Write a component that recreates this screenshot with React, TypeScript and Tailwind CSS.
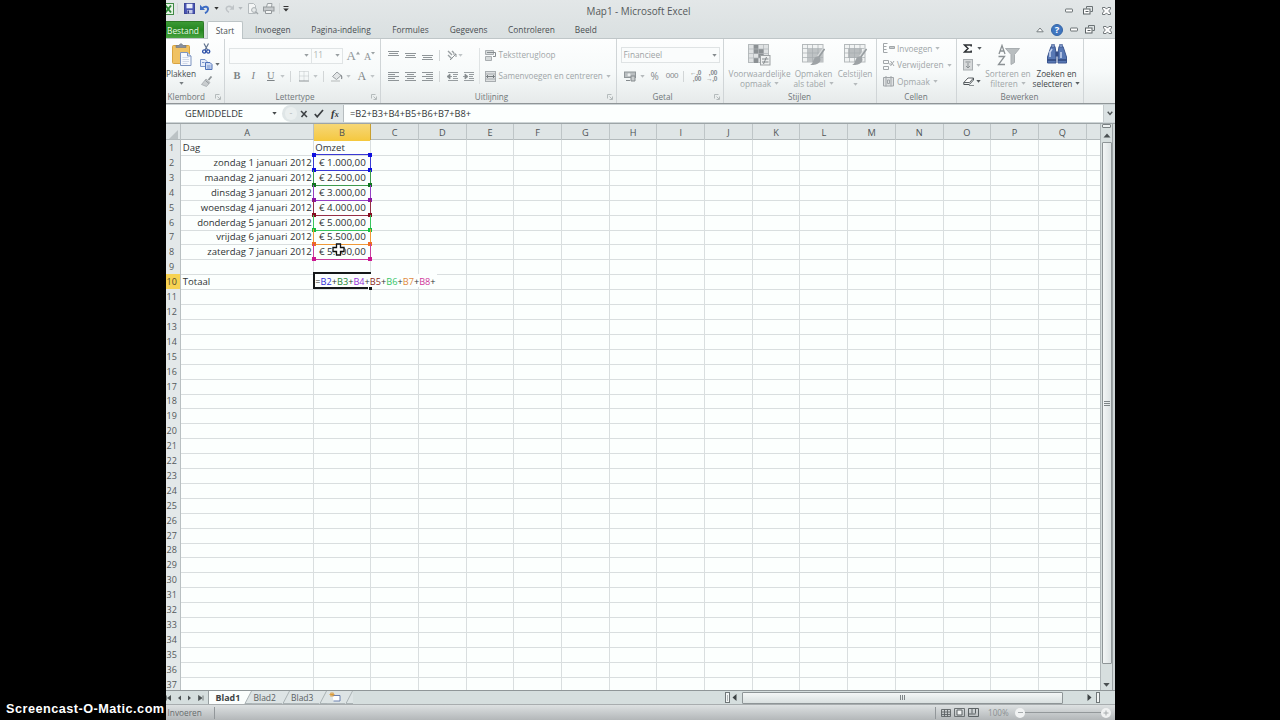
import React from 'react';

const CELL_COLUMNS = ['C', 'D', 'E', 'F', 'G', 'H', 'I', 'J', 'K', 'L', 'M', 'N', 'O', 'P', 'Q'];
const GRID = 'grid grid-cols-[15.300px_132.500px_57.500px_repeat(15,47.690px)_minmax(0,1fr)]';

const DAYS = [
  { label: 'zondag 1 januari 2012', amount: '€ 1.000,00', border: 'border-[#3a3ad4]', handle: 'bg-[#1010e0]', text: 'text-[#3030d8]' },
  { label: 'maandag 2 januari 2012', amount: '€ 2.500,00', border: 'border-[#3f9a50]', handle: 'bg-[#107520]', text: 'text-[#258535]' },
  { label: 'dinsdag 3 januari 2012', amount: '€ 3.000,00', border: 'border-[#9440c4]', handle: 'bg-[#8a18a8]', text: 'text-[#9434d8]' },
  { label: 'woensdag 4 januari 2012', amount: '€ 4.000,00', border: 'border-[#963048]', handle: 'bg-[#850d20]', text: 'text-[#8c2a20]' },
  { label: 'donderdag 5 januari 2012', amount: '€ 5.000,00', border: 'border-[#38c45e]', handle: 'bg-[#12c040]', text: 'text-[#35c465]' },
  { label: 'vrijdag 6 januari 2012', amount: '€ 5.500,00', border: 'border-[#ee9a3a]', handle: 'bg-[#ee6a25]', text: 'text-[#e08a40]' },
  { label: 'zaterdag 7 januari 2012', amount: '€ 5.000,00', border: 'border-[#c83e9e]', handle: 'bg-[#cc1590]', text: 'text-[#d03a9c]' },
];

type IconProps = { className?: string };

function Svg({ w, h, className = '', children }: { w: number; h: number; className?: string; children: React.ReactNode }) {
  return (
    <svg width={w} height={h} viewBox={`0 0 ${w} ${h}`} className={`shrink-0 ${className}`} fill="none">
      {children}
    </svg>
  );
}

function Caret({ className = 'text-[#a5abad]' }: IconProps) {
  return (
    <Svg w={5} h={3} className={className}>
      <path d="M0.3 0h4.4L2.5 2.8z" fill="currentColor" />
    </Svg>
  );
}

function Divider({ className = '' }: IconProps) {
  return <div className={`h-[11px] w-px shrink-0 bg-[#d2d6d7] ${className}`} />;
}

/* ---------- vensterknoppen ---------- */

function WindowButtons({ tight = false }: { tight?: boolean }) {
  return (
    <>
      <Svg w={8} h={5}>
        <rect x="0.5" y="1" width="7" height="3" rx="0.5" fill="#fff" stroke="#6b7275" />
      </Svg>
      <Svg w={10} h={9} className={tight ? 'ml-[7px]' : 'ml-[10px]'}>
        <path d="M3.500 2.500v-2h6v5h-2" stroke="#6b7275" />
        <rect x="0.500" y="3" width="6.500" height="5" stroke="#5b6265" fill="#fff" />
        <path d="M2.500 5.500h3" stroke="#5b6265" />
      </Svg>
      <Svg w={9} h={8} className={tight ? 'ml-[8px]' : 'ml-[9px]'}>
        <path d="M0.500 0.500h2.600l1.400 1.600L5.900.500h2.600v1.400L6.700 4l1.800 2.100v1.400H5.900L4.500 5.900 3.100 7.500H.5V6.100L2.300 4 .5 1.900z" fill="#fff" stroke="#62696c" strokeWidth="0.900" />
      </Svg>
    </>
  );
}

function TitleBar() {
  return (
    <div className="relative flex h-[21px] items-center overflow-hidden">
      <Svg w={8} h={12} className="-mt-[4px]">
        <rect x="-2" y="0.500" width="9.500" height="11" fill="#e8f4e6" stroke="#3f8a45" />
        <path d="M-.5 2.500l5.500 7M5 2.500l-5.500 7" stroke="#2f8a3a" strokeWidth="2" />
      </Svg>
      <Divider className="ml-[3px] -mt-[4px]" />
      <Svg w={11} h={11} className="ml-[6px] -mt-[4px]">
        <rect x="0.500" y="0.500" width="10" height="10" fill="#4a56b4" stroke="#3d4798" />
        <rect x="2.500" y="0.800" width="6" height="4.500" fill="#e9edfb" />
        <rect x="3" y="7" width="5.500" height="3.500" fill="#c7cdea" />
        <rect x="3.500" y="7.500" width="1.500" height="3" fill="#323b82" />
      </Svg>
      <Svg w={10} h={10} className="ml-[5px] -mt-[4px]">
        <path d="M2 4.200C5 1.600 8.500 2.500 8 5.500 7.800 7.200 6.500 8.500 5 9.200" stroke="#3d6cc4" strokeWidth="2" />
        <path d="M0 0.800v5.200h5z" fill="#3d6cc4" />
      </Svg>
      <Caret className="ml-[4px] -mt-[5px] text-[#333]" />
      <Svg w={9} h={9} className="ml-[6px] -mt-[4px]">
        <path d="M7 3.500C4.500 1.500 1 2.200 1.300 5 1.500 6.500 2.500 7.700 4 8.200" stroke="#bfc4c7" strokeWidth="1.600" />
        <path d="M9 0.800v5H4.500z" fill="#bfc4c7" />
      </Svg>
      <Caret className="ml-[4px] -mt-[5px] text-[#b5babd]" />
      <Svg w={12} h={12} className="ml-[4px] -mt-[4px]">
        <path d="M1.500 0.500h5l2 2v8h-7z" fill="#f3f5f5" stroke="#b4babd" />
        <circle cx="7" cy="7" r="2.400" fill="#e6eaea" stroke="#a8aeb1" />
        <path d="M8.700 8.700l2.300 2.300" stroke="#a0a6a9" strokeWidth="1.400" />
      </Svg>
      <Svg w={12} h={11} className="ml-[4px] -mt-[4px]">
        <path d="M3.500 4L4.500.5h4.500L8.500 4" fill="#f2f4f4" stroke="#9ba1a4" />
        <rect x="0.500" y="4" width="10.500" height="4" fill="#c6cacc" stroke="#94999c" />
        <path d="M2.500 7.500h6v3h-6z" fill="#f2f4f4" stroke="#94999c" />
      </Svg>
      <Divider className="ml-[4px] -mt-[4px]" />
      <Svg w={6} h={6} className="ml-[3px] -mt-[3px]">
        <path d="M0.500 0.500h5" stroke="#333" />
        <path d="M0.200 2.500h5.600L3 5.600z" fill="#333" />
      </Svg>
      <div className="absolute top-[4px] left-[420.500px] text-[9.900px] leading-[14px] whitespace-nowrap text-[#55595b]">
        Map1 - Microsoft Excel
      </div>
      <div className="mr-[4px] ml-auto flex items-center">
        <WindowButtons />
      </div>
    </div>
  );
}

function TabBar() {
  return (
    <div className="flex h-[17px] items-stretch text-[8.350px] leading-[18px] text-[#4a4f52]">
      <div className="w-[38px] rounded-tr-[2px] border-t border-r border-[#2c7a25] bg-linear-to-b from-[#3b9a35] via-[#23861f] to-[#48a540] pr-[3px] text-center leading-[17px] text-[#eafbe6]">Bestand</div>
      <div className="z-10 ml-[3px] h-[18px] w-[36px] rounded-t-[2px] border border-b-0 border-[#bcc4c6] bg-[#fdfefe] text-center leading-[17px]">Start</div>
      <div className="ml-[12px]">Invoegen</div>
      <div className="ml-[20.500px]">Pagina-indeling</div>
      <div className="ml-[21.500px]">Formules</div>
      <div className="ml-[21px]">Gegevens</div>
      <div className="ml-[20.500px]">Controleren</div>
      <div className="ml-[20px]">Beeld</div>
      <div className="mr-[3px] ml-auto flex items-center">
        <Svg w={8} h={6}>
          <path d="M0.800 4.800L4 1l3.200 3.800z" fill="#fff" stroke="#777e81" />
        </Svg>
        <Svg w={12} h={12} className="ml-[7px]">
          <circle cx="6" cy="6" r="5.500" fill="#3f76bf" stroke="#3565a6" />
          <text x="6" y="9.300" textAnchor="middle" fontSize="9.500" fontWeight="700" fill="#fff">?</text>
        </Svg>
        <div className="ml-[7px] flex items-center">
          <WindowButtons tight />
        </div>
      </div>
    </div>
  );
}

/* ---------- lint ---------- */

function Group({ title, width, launcher = true, labelClass = '', children }: { title: string; width: string; launcher?: boolean; labelClass?: string; children: React.ReactNode }) {
  return (
    <div className={`flex h-full shrink-0 flex-col border-r border-[#d0d5d7] ${width}`}>
      <div className="h-[51px] shrink-0">{children}</div>
      <div className="flex h-[13px] shrink-0 items-center text-[8.150px] leading-[13px] text-[#707679]">
        <span className={`flex-1 text-center ${labelClass}`}>{title}</span>
        {launcher && (
          <Svg w={6} h={6} className="mr-[3px]">
            <path d="M0.500 4.500v-4h4M2.500 2.500l2.500 2.500M5.500 2.500v3h-3" stroke="#aeb4b6" strokeWidth="0.900" />
          </Svg>
        )}
      </div>
    </div>
  );
}

function ClipboardGroup() {
  return (
    <Group title="Klembord" width="w-[58.500px]" labelClass="pr-[8px]">
      <div className="flex">
        <div className="flex w-[30px] flex-col items-center pt-[4px]">
          <Svg w={22} h={23} className="-ml-px">
            <rect x="2.500" y="2.500" width="17" height="18" rx="1" fill="#f0c263" stroke="#d9a441" />
            <path d="M6 4.500V2.500h2.500L11 .5l2.500 2H16v2z" fill="#8790a0" stroke="#6d7585" strokeWidth="0.600" />
            <path d="M10.500 9.500h7l3.500 3.500v9.500H10.500z" fill="#f7f9fd" stroke="#7d94c0" />
            <path d="M17.500 9.500v3.500H21" stroke="#7d94c0" fill="#d5deef" />
            <path d="M12.500 14.500h6M12.500 16.500h6.500M12.500 18.500h6.500M12.500 20.500h5" stroke="#c0cbe0" strokeWidth="0.700" />
          </Svg>
          <span className="mt-[2px] text-[8.300px] leading-[12px] text-[#4a4f52]">Plakken</span>
          <Caret className="mt-[2px] text-[#777d80]" />
        </div>
        <div className="flex flex-col pt-[4px] pl-[4px]">
          <Svg w={9} h={11} className="ml-[2px]">
            <path d="M2 .5L5.500 7M6.500.5L3 7" stroke="#62748f" strokeWidth="1.200" />
            <circle cx="2.200" cy="8.500" r="1.600" stroke="#2c50a8" strokeWidth="1.300" />
            <circle cx="6.200" cy="8.500" r="1.600" stroke="#2c50a8" strokeWidth="1.300" />
          </Svg>
          <div className="mt-[5px] flex items-center">
            <Svg w={13} h={11}>
              <path d="M0.500 0.500h4.500l2 2v5H.5z" fill="#e6ecf8" stroke="#7a95c8" />
              <path d="M5.500 3.500h4.500l2 2v5H5.500z" fill="#cddaf2" stroke="#4c70b8" />
              <path d="M2 3.500h2.500M7 7h3.500M7 9h3.500" stroke="#5e7fc0" strokeWidth="0.800" />
            </Svg>
            <Caret className="ml-[2px] text-[#666c6f]" />
          </div>
          <Svg w={12} h={11} className="mt-[6px] ml-px">
            <path d="M10.500.5L7.500 4" stroke="#8d9396" strokeWidth="1.800" />
            <path d="M5 3l4 3.500-3.500 4L.5 8.500z" fill="#c9cdcf" stroke="#a5aaad" strokeWidth="0.800" />
            <path d="M4.500 4.500l3.500 3" stroke="#8d9396" />
          </Svg>
        </div>
      </div>
    </Group>
  );
}

function FontGroup() {
  return (
    <Group title="Lettertype" width="w-[156px]" labelClass="pr-[5px]">
      <div className="flex h-[32px] items-center pl-[4px] pt-px">
        <div className="flex h-[16px] w-[83px] items-center justify-end border border-[#e0e4e5] bg-[#fafcfc] pr-[2px]">
          <Caret className="text-[#999fa2]" />
        </div>
        <div className="flex h-[16px] w-[31px] items-center border border-l-0 border-[#e0e4e5] bg-[#fafcfc] pl-[2px] text-[8.300px] text-[#acb1b3]">
          11
          <Caret className="mr-[2px] ml-auto text-[#999fa2]" />
        </div>
        <span className="ml-[4px] font-['Liberation_Serif'] text-[13px] leading-[14px] text-[#8f9598]">A</span>
        <Svg w={4} h={10}><path d="M0 3.500L2 .5l2 3z" fill="#9ba1a3" /></Svg>
        <span className="ml-[4px] pt-[2px] font-['Liberation_Serif'] text-[10px] leading-[12px] text-[#8f9598]">A</span>
        <Svg w={4} h={10}><path d="M0 1l2 2.500L4 1z" fill="#9ba1a3" /></Svg>
      </div>
      <div className="-mt-[4px] flex h-[18px] items-center pl-[9px] font-['Liberation_Serif'] text-[10.500px] leading-[18px] text-[#7e8487]">
        <span className="font-bold">B</span>
        <span className="ml-[11px] italic">I</span>
        <span className="ml-[12px] underline">U</span>
        <Caret className="ml-[5px] text-[#c0c5c7]" />
        <Divider className="ml-[5px]" />
        <Svg w={11} h={11} className="ml-[8px]">
          <path d="M.5.5h9v9M.5.5v9M5 .5v9M.5 5h9" stroke="#bfc4c6" strokeDasharray="1 1" />
          <path d="M0 10h10" stroke="#8f9598" />
        </Svg>
        <Caret className="ml-[3px] text-[#c0c5c7]" />
        <Divider className="ml-[5px]" />
        <Svg w={12} h={11} className="ml-[7px]">
          <path d="M1.500 5.500L6 1l4 3.500-4.500 4z" fill="#e3e6e7" stroke="#9aa0a3" />
          <path d="M9.500 4c1.500.5 1.500 2 1 4" stroke="#858b8e" strokeWidth="1.200" />
          <path d="M0 10h9" stroke="#c8cccd" strokeWidth="1.500" />
        </Svg>
        <Caret className="ml-[3px] text-[#c0c5c7]" />
        <span className="ml-[7px] text-[12px]">A</span>
        <Caret className="ml-[4px] text-[#c0c5c7]" />
      </div>
    </Group>
  );
}

// Zes varianten van uitlijning, elk in een vak van 11x11
function Lines({ kind, className = '' }: { kind: 'top' | 'middle' | 'bottom' | 'left' | 'center' | 'right'; className?: string }) {
  const paths = {
    top: 'M0 1.500h11M1 3.500h9M0 5.500h11',
    middle: 'M0 3.500h11M1 5.500h9M0 7.500h11',
    bottom: 'M0 5.500h11M1 7.500h9M0 9.500h11',
    left: 'M0 1.500h11M0 3.500h7M0 5.500h11M0 7.500h7M0 9.500h11',
    center: 'M0 1.500h11M2 3.500h7M0 5.500h11M2 7.500h7M0 9.500h11',
    right: 'M0 1.500h11M4 3.500h7M0 5.500h11M4 7.500h7M0 9.500h11',
  };
  return (
    <Svg w={11} h={11} className={className}>
      <path d={paths[kind]} stroke="#8f9598" />
    </Svg>
  );
}

function Indent({ flip = false, className = '' }: { flip?: boolean; className?: string }) {
  return (
    <Svg w={11} h={11} className={className}>
      <path d="M1 1.500h10M6 3.500h5M6 5.500h4M6 7.500h5M1 9.500h10" stroke="#989ea1" />
      <path d={flip ? 'M0 5.500h3M2 3l3 2.500-3 2.500z' : 'M2 5.500h3M3 3L0 5.500 3 8z'} stroke="#858b8e" fill="#858b8e" strokeWidth="0.800" />
    </Svg>
  );
}

function AlignGroup() {
  return (
    <Group title="Uitlijning" width="w-[236px]" labelClass="pr-[4px]">
      <div className="flex text-[8.150px] text-[#a0a6a8]">
        <div className="flex w-[98px] flex-col">
          <div className="flex h-[32px] items-center pl-[7px]">
            <Lines kind="top" />
            <Lines kind="middle" className="ml-[6px]" />
            <Lines kind="bottom" className="ml-[6px]" />
            <Divider className="ml-[6px]" />
            <Svg w={12} h={11} className="ml-[7px]">
              <path d="M1 1l4 4M1 5l4 4M5 1l2 2" stroke="#9aa0a3" strokeWidth="1.400" />
              <path d="M3 10l6-6M9 4v3M9 4H6" stroke="#8f9598" />
            </Svg>
            <Caret className="-ml-px text-[#c0c5c7]" />
          </div>
          <div className="-mt-[4px] flex h-[18px] items-center pl-[7px]">
            <Lines kind="left" />
            <Lines kind="center" className="ml-[6px]" />
            <Lines kind="right" className="ml-[6px]" />
            <Divider className="ml-[6px]" />
            <Indent className="ml-[7px]" />
            <Indent flip className="ml-[5px]" />
          </div>
        </div>
        <div className="mt-[9px] h-[36px] w-px bg-[#dfe3e4]" />
        <div className="flex flex-col pl-[5px]">
          <div className="flex h-[32px] items-center whitespace-nowrap">
            <Svg w={11} h={11}>
              <path d="M.5.5h8v4h-8zM.5 6.500h6v4h-6z" fill="#d6dadb" stroke="#a8adb0" />
              <path d="M2 2.500h8.500v4H8" stroke="#858b8e" />
            </Svg>
            <span className="ml-[3px]">Tekstterugloop</span>
          </div>
          <div className="-mt-[4px] flex h-[18px] items-center whitespace-nowrap">
            <Svg w={11} h={11}>
              <rect x="0.500" y="0.500" width="10" height="10" fill="#dde0e1" stroke="#a8adb0" />
              <path d="M.5 3h10M.5 8h10" stroke="#a8adb0" />
              <path d="M1.500 5.500h8M3 4L1.500 5.500 3 7M8 4l1.500 1.500L8 7" stroke="#777d80" />
            </Svg>
            <span className="ml-[3px]">Samenvoegen en centreren</span>
            <Caret className="ml-[3px] text-[#b5babc]" />
          </div>
        </div>
      </div>
    </Group>
  );
}

function NumberGroup() {
  return (
    <Group title="Getal" width="w-[107px]" labelClass="pr-[5px]">
      <div className="flex h-[32px] items-center pl-[4px] text-[8.300px] text-[#9da3a5]">
        <div className="flex h-[16px] w-[99px] items-center border border-[#dfe3e4] bg-[#fafcfc] pl-[2px]">
          Financieel
          <Caret className="mr-[2px] ml-auto text-[#858b8e]" />
        </div>
      </div>
      <div className="-mt-[4px] flex h-[18px] items-center pl-[7px] text-[8.500px] text-[#858b8e]">
        <Svg w={12} h={11}>
          <rect x="0.500" y="1" width="11" height="5.500" fill="#b9bec0" stroke="#8f9598" />
          <circle cx="5" cy="3.700" r="1.500" fill="#ecefef" />
          <path d="M7 5h4v5H7zM2 9.500h4" stroke="#858b8e" fill="#c9cdce" />
        </Svg>
        <Caret className="ml-[4px] text-[#b5babc]" />
        <span className="ml-[6px] text-[10px]">%</span>
        <span className="ml-[7px] font-['Liberation_Sans'] text-[8px] tracking-[-0.300px]">000</span>
        <Divider className="ml-[5px]" />
        <div className="ml-[5px] w-[12px] text-right font-['Liberation_Sans'] text-[6.500px] leading-[6px] font-bold tracking-[-0.200px]">
          ←,0
          <br />
          ,00
        </div>
        <div className="ml-[4px] w-[12px] text-right font-['Liberation_Sans'] text-[6.500px] leading-[6px] font-bold tracking-[-0.200px]">
          ,00
          <br />
          →,0
        </div>
      </div>
    </Group>
  );
}

function BigButton({ width, lines, caret, enabled = false, children }: { width: string; lines: string[]; caret: 'inline' | 'below'; enabled?: boolean; children: React.ReactNode }) {
  return (
    <div className={`flex flex-col items-center pt-[5px] text-[8.250px] leading-[9.500px] whitespace-nowrap ${width} ${enabled ? 'text-[#45494c]' : 'text-[#a0a6a8]'}`}>
      {children}
      <span className="mt-[3px]">{lines[0]}</span>
      {caret === 'inline' ? (
        <span className="flex items-center">
          {lines[1]}
          <Caret className={`ml-[3px] ${enabled ? 'text-[#5a6063]' : 'text-[#b5babc]'}`} />
        </span>
      ) : (
        <Caret className="mt-[4px] text-[#b5babc]" />
      )}
    </div>
  );
}

function StylesGroup() {
  return (
    <Group title="Stijlen" width="w-[153px]" launcher={false}>
      <div className="flex pl-[4px]">
        <BigButton width="w-[64px]" lines={['Voorwaardelijke', 'opmaak']} caret="inline">
          <Svg w={23} h={22}>
            <rect x="0.500" y="0.500" width="20" height="18" fill="#dfe2e3" stroke="#b5babc" />
            <path d="M6 1h4v9H6zM6 14h4v5H6zM10 5h6v9h-6z" fill="#8b9093" />
            <path d="M.5 5h20M.5 9.500h20M.5 14h20M5.500.5v18M10.500.5v18M15.500.5v18" stroke="#b0b5b7" strokeWidth="0.700" />
            <rect x="12.500" y="11.500" width="9.500" height="9.500" fill="#eef0f0" stroke="#9da2a4" />
            <path d="M14 15h6.500M14 18h6.500M18.500 13l-3 7" stroke="#858b8e" />
          </Svg>
        </BigButton>
        <BigButton width="w-[44px]" lines={['Opmaken', 'als tabel']} caret="inline">
          <TableBrush />
        </BigButton>
        <BigButton width="w-[39px]" lines={['Celstijlen']} caret="below">
          <TableBrush solid />
        </BigButton>
      </div>
    </Group>
  );
}

function TableBrush({ solid = false }: { solid?: boolean }) {
  return (
    <Svg w={23} h={22}>
      <rect x="0.500" y="0.500" width="20.500" height="17.500" fill="#f1f3f3" stroke="#b5babc" />
      {solid ? (
        <rect x="4" y="4.500" width="14" height="9.500" fill="#b9bdbf" />
      ) : (
        <path d="M6 5h15v13H6z" fill="#bfc3c5" />
      )}
      <path d="M.5 4.500h20.500M.5 9h20.500M.5 13.500h20.500M5.500.5v17.500M10.500.5v17.500M16 .5v17.500" stroke="#a8adb0" strokeWidth="0.700" />
      <path d="M22 4.500l-6.500 9" stroke="#d9dcdd" strokeWidth="2.600" />
      <path d="M22.500 5l-6 8.500" stroke="#979da0" strokeWidth="1.600" />
      <path d="M16.500 12.500c2 1 2.500 3 1.500 5s-5 4-10 3.500c3-1.500 2.500-3 4-6 1-2 3-3 4.500-2.500z" fill="#9ea3a6" />
    </Svg>
  );
}

function CellsGroup() {
  const items = ['Invoegen', 'Verwijderen', 'Opmaak'];
  return (
    <Group title="Cellen" width="w-[80px]" launcher={false}>
      <div className="flex flex-col pt-[1.500px] pl-[6px] text-[8.300px] text-[#a0a6a8]">
        {items.map((item, i) => (
          <div key={item} className="flex h-[16.500px] items-center">
            <Svg w={12} h={11}>
              {i === 0 && <path d="M.5.5h4M.5.5v9M.5 9.500h4M.5 3.500h3M.5 6.500h3M6.500 3.500h5v2h-5z" stroke="#a1a6a9" fill="#c8ccce" />}
              {i === 1 && <path d="M.5.500h5v3h-5zM.5 6.500h5v3h-5zM6 4h2M7.500 1l3.500 5M11 1L7.500 6" stroke="#a1a6a9" />}
              {i === 2 && <path d="M.5 1.500h10v8.500H.5zM3 0v10.500M8 0v10.500M4.500 4h2v3.500h-2z" stroke="#a1a6a9" fill="#dfe2e3" />}
            </Svg>
            <span className="ml-[2.500px]">{item}</span>
            <Caret className="ml-[3px] text-[#b5babc]" />
          </div>
        ))}
      </div>
    </Group>
  );
}

function EditGroup() {
  return (
    <Group title="Bewerken" width="w-[127px]" launcher={false}>
      <div className="flex">
        <div className="flex w-[27px] flex-col pt-[1.500px] pl-[6.500px]">
          <div className="flex h-[16.500px] items-center">
            <Svg w={10} h={9}>
              <path d="M8.200 2.500V1H1.500L5 4.500 1.500 8h6.700V6.500" stroke="#2c3033" strokeWidth="1.500" />
            </Svg>
            <Caret className="ml-[4px] text-[#555b5e]" />
          </div>
          <div className="flex h-[16.500px] items-center">
            <Svg w={10} h={12}>
              <rect x="0.500" y="0.500" width="9" height="10.500" fill="#d6d9da" stroke="#a8adb0" />
              <path d="M2.500 3h5M5 4v5M3 7l2 2 2-2" stroke="#8b9194" />
            </Svg>
            <Caret className="ml-[3px] text-[#b5babc]" />
          </div>
          <div className="flex h-[16.500px] items-center">
            <Svg w={12} h={9}>
              <path d="M.8 5.500L5 1h5.500L6.500 5.500z" fill="#fff" stroke="#5b6164" />
              <path d="M.8 5.500v2h5.500l4.200-4.500V1" stroke="#4e5457" />
              <path d="M6 8.500h5" stroke="#8b9194" />
            </Svg>
            <Caret className="ml-px text-[#555b5e]" />
          </div>
        </div>
        <BigButton width="w-[49px]" lines={['Sorteren en', 'filteren']} caret="inline">
          <Svg w={23} h={22}>
            <path d="M8.500 4.500h14l-5 6v8l-3.500 2v-10z" fill="#b9bec0" stroke="#a8adb0" />
            <path d="M2 10L5 1.500 8 10M3 7h4M1.500 12.500h6l-6 8h6.500" stroke="#8b9194" strokeWidth="1.300" />
          </Svg>
        </BigButton>
        <BigButton width="w-[48px]" lines={['Zoeken en', 'selecteren']} caret="inline" enabled>
          <Svg w={22} h={22}>
            <path d="M5 2.500h4l1 6.500v10H1.500V13z" fill="#5878b4" stroke="#3c5791" />
            <path d="M13 2.500h4L20.500 13v6H12V9z" fill="#5878b4" stroke="#3c5791" />
            <path d="M9.500 7.500h3v5h-3z" fill="#344d85" />
            <path d="M5.500.5h3v3h-3zM13.500.5h3v3h-3z" fill="#7b93c4" stroke="#3c5791" strokeWidth="0.600" />
            <path d="M4 13V8l2-3M15 8v6" stroke="#c3d1ee" strokeWidth="1.600" />
            <path d="M1.500 16h8.500M12 16h8.500" stroke="#2e467c" strokeWidth="1.400" />
          </Svg>
        </BigButton>
      </div>
    </Group>
  );
}

function Ribbon() {
  return (
    <div className="flex h-[66px] border-t border-b border-t-[#bfc6c8] border-b-[#8f9597] bg-linear-to-b from-[#fdfefe] via-[#f7fafa] to-[#e6eaea]">
      <ClipboardGroup />
      <FontGroup />
      <AlignGroup />
      <NumberGroup />
      <StylesGroup />
      <CellsGroup />
      <EditGroup />
    </div>
  );
}

function FormulaBar() {
  return (
    <div className="flex h-[17px] items-center bg-[#fcfffe] text-[9.250px] leading-[17px] text-[#333738]">
      <div className="flex h-full w-[114px] items-center pl-[19px]">
        GEMIDDELDE
        <Caret className="mr-[3px] ml-auto text-[#44494b]" />
      </div>
      <div className="ml-[2px] flex h-full w-[62px] items-center rounded-l-full border-r border-[#b6bdbf] bg-[#dfe6e7] pl-[3px]">
        <div className="h-[13px] w-[12px] rounded-full bg-[#eaefef] text-center text-[9px] leading-[11px] text-[#b5babc]">-</div>
        <Svg w={8} h={8} className="ml-[3px]">
          <path d="M1 1l6 6M6.500 1L1.500 7" stroke="#3b3f42" strokeWidth="1.500" />
        </Svg>
        <Svg w={10} h={9} className="ml-[6px]">
          <path d="M.8 5l2.400 2.800L9 1" stroke="#3b3f42" strokeWidth="1.700" />
        </Svg>
        <span className="ml-[7px] font-['Liberation_Serif'] text-[11px] font-bold italic">
          f<span className="text-[8px]">x</span>
        </span>
      </div>
      <div className="flex-1 pl-[6px]">=B2+B3+B4+B5+B6+B7+B8+</div>
      <div className="flex h-full w-[12px] items-center justify-center border-l border-[#c5cbcd] bg-[#dbe2e3]">
        <Svg w={6} h={5}>
          <path d="M.7.8L3 3.500 5.300.8" stroke="#4f5557" strokeWidth="1.400" />
        </Svg>
      </div>
    </div>
  );
}

/* ---------- werkblad ---------- */

function HeaderRow() {
  return (
    <div className={`${GRID} h-[16px] border-b border-[#b3babc] bg-[#dfe5e6] text-center text-[9.200px] leading-[17px] text-[#4e5355]`}>
      <div className="flex items-end justify-end border-r border-[#b9c0c2] pr-[2px] pb-[2px]">
        <Svg w={9} h={9}>
          <path d="M9 0v9H0z" fill="#bbc2c4" />
        </Svg>
      </div>
      <div className="border-r border-[#b9c0c2]">A</div>
      <div className="border-r border-[#c89f30] bg-linear-to-b from-[#f6d775] to-[#f5c83c]">B</div>
      {CELL_COLUMNS.map((c) => (
        <div key={c} className="border-r border-[#bec5c7]">{c}</div>
      ))}
      <div />
    </div>
  );
}

function Handles({ color, top = false }: { color: string; top?: boolean }) {
  return (
    <>
      <div className={`absolute -bottom-[2px] -left-[2px] h-[4px] w-[4px] ${color}`} />
      <div className={`absolute -right-[2px] -bottom-[2px] h-[4px] w-[4px] ${color}`} />
      {top && (
        <>
          <div className={`absolute -top-[2px] -left-[2px] h-[4px] w-[4px] ${color}`} />
          <div className={`absolute -top-[2px] -right-[2px] h-[4px] w-[4px] ${color}`} />
        </>
      )}
    </>
  );
}

function SheetRow({ n }: { n: number }) {
  const day = n >= 2 && n <= 8 ? DAYS[n - 2] : null;
  const cell = 'border-r border-b border-[#d9dedf]';
  return (
    <div className={`${GRID} h-[14.920px] text-[9.550px] leading-[15px] whitespace-nowrap text-[#2f3334]`}>
      <div className={`-ml-[3px] border-r border-b border-[#b9c0c2] text-center text-[9px] ${n === 10 ? 'bg-[#f7d252] text-[#4a4630]' : 'bg-[#e3e8e9] text-[#54595b]'}`}>{n}</div>
      <div className={`${cell} ${day ? 'pr-px text-right' : 'pl-[1.500px]'}`}>
        {n === 1 && 'Dag'}
        {n === 10 && 'Totaal'}
        {day && day.label}
      </div>
      <div className={`relative ${cell}`}>
        {n === 1 && <span className="pl-[1.500px]">Omzet</span>}
        {day && (
          <>
            <div className="pr-[4.500px] text-right text-[9.800px]">{day.amount}</div>
            {/* alleen de eerste rij heeft een eigen bovenrand */}
            <div className={`absolute -right-px -bottom-px -left-px z-10 border ${n === 2 ? '-top-px' : 'top-0 border-t-0'} ${day.border}`}>
              <Handles color={day.handle} top={n === 2} />
            </div>
          </>
        )}
        {n === 8 && (
          <Svg w={13} h={13} className="absolute -top-px left-[18px] z-20">
            <path d="M4.500 1h4v3.500H12v4H8.500V12h-4V8.500H1v-4h3.500z" fill="#fff" stroke="#111" strokeWidth="1.300" />
          </Svg>
        )}
        {n === 10 && (
          <div className="absolute -top-[2px] -left-px z-10 h-[17px] w-[58px] border-2 border-r-0 border-[#15181a]">
            <div className="h-[13px] w-[122px] bg-[#fcfffe] pl-[0.500px] text-[9.180px] leading-[15px]">
              =
              {DAYS.map((d, i) => (
                <React.Fragment key={d.label}>
                  <span className={d.text}>B{i + 2}</span>+
                </React.Fragment>
              ))}
            </div>
            <div className="absolute -right-px -bottom-[3px] h-[3px] w-[4px] border-l border-[#fcfffe] bg-[#15181a]" />
          </div>
        )}
      </div>
      {CELL_COLUMNS.map((c) => (
        <div key={c} className={cell} />
      ))}
      <div className="border-b border-[#d9dedf]" />
    </div>
  );
}

function VerticalScroll() {
  return (
    <div className="flex w-[12px] flex-col items-center border-l border-[#b0b7b9] bg-[#d7dfdf]">
      <div className="h-[4px] w-[9px] rounded-[1px] border border-[#7a8183] bg-[#eef2f2]" />
      <Svg w={8} h={5} className="mt-[5px]">
        <path d="M0.500 4.500L4 .5l3.500 4z" fill="#4a5052" />
      </Svg>
      <div className="mt-[4px] flex h-[522px] w-[10px] flex-col items-center justify-center gap-px rounded-[1px] border border-[#8e9597] bg-linear-to-r from-[#f3f6f6] to-[#dde3e4]">
        <div className="h-px w-[6px] bg-[#7e8587]" />
        <div className="h-px w-[6px] bg-[#7e8587]" />
        <div className="h-px w-[6px] bg-[#7e8587]" />
      </div>
      <Svg w={7} h={4} className="mt-auto mb-[3px]">
        <path d="M0.300 0h6.400L3.500 3.800z" fill="#4a5052" />
      </Svg>
    </div>
  );
}

function TabEdge({ first = false }: { first?: boolean }) {
  return (
    <Svg w={8} h={13} className="bg-[#dde4e5]">
      <path d="M0 0h7.500L1 12.500H0z" fill={first ? '#fbfefd' : '#dde4e5'} />
      <path d="M7.500 0L1 12.500h7" stroke="#a4adaf" strokeWidth="0.900" />
    </Svg>
  );
}

function SheetTabs() {
  return (
    <div className="flex h-[14px] items-stretch border-t border-[#8f9698] bg-[#d5dede] text-[8.500px] leading-[14px] text-[#5a6062]">
      <div className="flex w-[42px] items-center gap-[5.500px]">
        <Svg w={5} h={6}><path d="M.5.5v5M5 .5v5L1.500 3z" stroke="#4a5052" fill="#4a5052" strokeWidth="0.700" /></Svg>
        <Svg w={5} h={6}><path d="M4 .5v5L1 3z" fill="#4a5052" /></Svg>
        <Svg w={5} h={6}><path d="M1 .5v5L4 3z" fill="#4a5052" /></Svg>
        <Svg w={6} h={6}><path d="M.5.5v5L4 3zM5 .5v5" stroke="#4a5052" fill="#4a5052" strokeWidth="0.700" /></Svg>
      </div>
      <div className="w-[36px] border-l border-[#98a0a2] bg-[#fbfefd] pl-[6.500px] text-[8.900px] font-bold text-[#3d4345]">Blad1</div>
      <TabEdge first />
      <div className="w-[29.500px] border-b border-[#b0b8ba] bg-[#dde4e5] pl-[1.500px]">Blad2</div>
      <TabEdge />
      <div className="w-[29.500px] border-b border-[#b0b8ba] bg-[#dde4e5] pl-[1.500px]">Blad3</div>
      <TabEdge />
      <div className="flex w-[18px] items-center justify-center border-b border-[#b0b8ba] bg-[#dde4e5]">
        <Svg w={12} h={10} className="-ml-[3px]">
          <path d="M3.500 3.500h7.500v5.500H4.500" fill="#fff" stroke="#6b80b0" />
          <path d="M3 0v5M.5 2.500h5M1 .8l4 3.500M5 .8L1 4.300" stroke="#dc9a35" strokeWidth="0.900" />
        </Svg>
      </div>
      <TabEdge />
      <div className="ml-auto flex h-[11px] w-[5px] items-center justify-center self-center border border-[#6f7678] bg-[#f2f5f5]">
        <div className="h-[6px] w-px bg-[#b0b6b8]" />
      </div>
      <div className="flex w-[376px] items-center">
        <Svg w={5} h={7} className="ml-[2px]"><path d="M4.500 0v7L.5 3.500z" fill="#3d4345" /></Svg>
        <div className="ml-[5px] flex h-[12px] w-[321px] items-center justify-center gap-px rounded-[1px] border border-[#8e9597] bg-linear-to-b from-[#f3f6f6] to-[#d9e0e0]">
          <div className="h-[5px] w-px bg-[#7e8587]" />
          <div className="h-[5px] w-px bg-[#7e8587]" />
          <div className="h-[5px] w-px bg-[#7e8587]" />
        </div>
        <Svg w={5} h={7} className="ml-[24px]"><path d="M.5 0v7l4-3.500z" fill="#3d4345" /></Svg>
        <div className="ml-[4px] h-[11px] w-[4px] border border-[#6f7678] bg-[#f2f5f5]" />
      </div>
      <div className="w-[9px]" />
    </div>
  );
}

function StatusBar() {
  return (
    <div className="flex h-[16px] items-center border-t border-[#a8adaf] bg-linear-to-b from-[#dde1e2] to-[#b3b7b9] text-[8.300px] leading-[14px] text-[#676c6e]">
      <span className="pl-[1.500px]">Invoeren</span>
      <div className="ml-[12px] h-[12px] w-px bg-[#92979a]" />
      <div className="ml-auto h-[12px] w-px bg-[#92979a]" />
      <Svg w={10} h={8} className="ml-[5px]">
        <path d="M.5.5h9v7h-9zM.5 3h9M.5 5.500h9M3.500.5v7M6.500.5v7" stroke="#5d6365" strokeWidth="0.900" />
      </Svg>
      <Svg w={11} h={9} className="ml-[3px]">
        <path d="M.5.5h10v8H.5z" stroke="#6b7173" />
        <path d="M3 2h5v5H3z" fill="#f2f4f4" stroke="#5d6365" />
      </Svg>
      <Svg w={11} h={9} className="ml-[3px]">
        <path d="M.5.5h10v8H.5zM4 .5v5M7.500.5v5M.5 6h7" stroke="#5d6365" />
      </Svg>
      <span className="ml-[9px] w-[20px] text-[8.100px] text-[#8b9092]">100%</span>
      <div className="ml-[7px] flex h-[10px] w-[10px] items-center justify-center rounded-full bg-[#f0f2f2]">
        <div className="h-px w-[5px] bg-[#a5aaac]" />
      </div>
      <div className="h-px w-[76px] bg-[#93989a]" />
      <Svg w={10} h={10} className="mr-[4px]">
        <circle cx="5" cy="5" r="5" fill="#f0f2f2" />
        <path d="M2.500 5h5M5 2.500v5" stroke="#a5aaac" />
      </Svg>
    </div>
  );
}

export default function App() {
  const rows = Array.from({ length: 37 }, (_, i) => i + 1);

  return (
    <div className="flex h-[720px] w-[1280px] overflow-hidden bg-black font-['Open_Sans',sans-serif]">
      <div className="flex w-[166px] shrink-0 items-end pb-[3px] pl-[6px]">
        <span className="font-['Liberation_Sans',sans-serif] text-[12.700px] leading-[16px] font-bold tracking-[0.480px] whitespace-nowrap text-white">Screencast-O-Matic.com</span>
      </div>
      <div className="flex w-[949px] shrink-0 flex-col overflow-hidden bg-[#d7dedf]">
        <div className="bg-linear-to-b from-[#e3e7e8] to-[#dae0e1]">
          <TitleBar />
          <TabBar />
        </div>
        <Ribbon />
        <div className="flex flex-col bg-[#cdd4d6] py-px">
          <FormulaBar />
        </div>
        <div className="flex h-[567px] shrink-0 border-t border-[#9da5a7] bg-[#fcfffe]">
          <div className="min-w-0 flex-1 overflow-hidden">
            <HeaderRow />
            {rows.map((n) => (
              <SheetRow key={n} n={n} />
            ))}
          </div>
          <VerticalScroll />
          <div className="w-[3px] border-l border-[#9ba2a4] bg-[#cfd6d7]" />
        </div>
        <SheetTabs />
        <StatusBar />
      </div>
    </div>
  );
}
